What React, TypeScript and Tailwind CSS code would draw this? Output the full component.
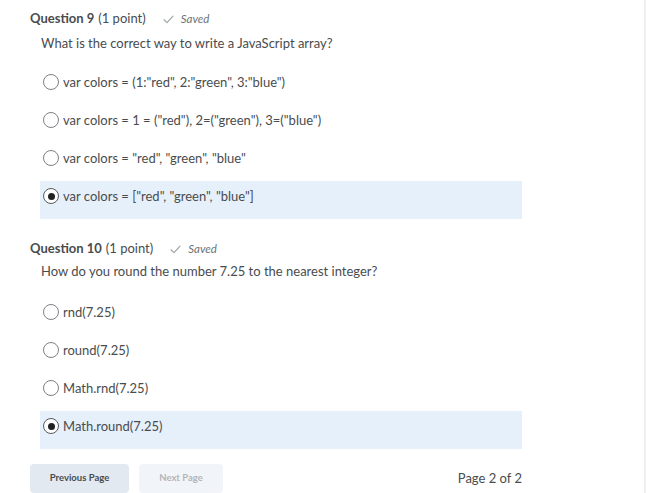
import React from "react";

type Q = {
  num: number;
  text: string;
  options: string[];
  selected: number;
};

const questions: Q[] = [
  {
    num: 9,
    text: "What is the correct way to write a JavaScript array?",
    options: [
      'var colors = (1:"red", 2:"green", 3:"blue")',
      'var colors = 1 = ("red"), 2=("green"), 3=("blue")',
      'var colors = "red", "green", "blue"',
      'var colors = ["red", "green", "blue"]',
    ],
    selected: 3,
  },
  {
    num: 10,
    text: "How do you round the number 7.25 to the nearest integer?",
    options: ["rnd(7.25)", "round(7.25)", "Math.rnd(7.25)", "Math.round(7.25)"],
    selected: 3,
  },
];

function Check() {
  return (
    <svg width="11" height="9" viewBox="0 0 11 9" className="mr-[7px]">
      <path d="M1 4.8 L4 7.6 L10 1.2" fill="none" stroke="#9ea3a6" strokeWidth="1.2" strokeLinecap="round" strokeLinejoin="round" />
    </svg>
  );
}

function Radio({ checked }: { checked: boolean }) {
  return (
    <span
      className={
        checked
          ? "flex h-[16px] w-[16px] shrink-0 items-center justify-center rounded-full border border-[#565a5c] bg-white"
          : "flex h-[16px] w-[16px] shrink-0 items-center justify-center rounded-full border border-[#7c8186] bg-white"
      }
    >
      {checked && <span className="h-[7px] w-[7px] rounded-full bg-[#202122]" />}
    </span>
  );
}

function Question({ q, first }: { q: Q; first: boolean }) {
  return (
    <div className={first ? "flex flex-col" : "mt-[20px] flex flex-col"}>
      <div className="mt-[1px] flex h-[18px] items-center text-[13px] text-[#494c4e]">
        <span className="font-bold">Question {q.num}</span>
        <span className="ml-[4px]">(1 point)</span>
        <span className="ml-[17px] flex items-center text-[11.5px] italic text-[#6e7376]">
          <Check />
          Saved
        </span>
      </div>
      <div className={first ? "mt-[6px] h-[18px] pl-[11px] text-[13px] leading-[18px] text-[#494c4e]" : "mt-[4px] h-[18px] pl-[11px] text-[13px] leading-[18px] text-[#494c4e]"}>
        {q.text}
      </div>
      <div className={first ? "mt-[15px] ml-[10px] flex flex-col" : "mt-[17px] ml-[10px] flex flex-col"}>
        {q.options.map((o, i) => (
          <div
            key={i}
            className={
              i === q.selected
                ? "flex h-[38px] items-start bg-[#e6f0fb] pl-[3px] pt-[7px]"
                : "flex h-[38px] items-start pl-[3px] pt-[7px]"
            }
          >
            <Radio checked={i === q.selected} />
            <span className="ml-[4px] text-[13px] leading-[16px] text-[#494c4e]">{o}</span>
          </div>
        ))}
      </div>
    </div>
  );
}

export default function App() {
  return (
    <div
      className="flex h-[493px] w-[646px] bg-white"
      style={{ fontFamily: "Lato, 'Open Sans', sans-serif" }}
    >
      <div className="flex w-[644px] flex-col pl-[30px] pt-[9px]">
        <div className="w-[492px]">
          {questions.map((q, i) => (
            <Question key={q.num} q={q} first={i === 0} />
          ))}
          <div className="mt-[15px] flex h-[29px] items-center">
            <button className="h-[29px] w-[99px] rounded-[4px] bg-[#e3e9f1] text-[9.5px] font-bold text-[#494c4e]">
              Previous Page
            </button>
            <button className="ml-[10px] h-[29px] w-[84px] rounded-[4px] bg-[#f1f4f8] text-[9.5px] font-bold text-[#b1b6ba]">
              Next Page
            </button>
            <span className="ml-auto text-[13px] text-[#494c4e]">Page 2 of 2</span>
          </div>
        </div>
      </div>
      <div className="h-full w-[2px] bg-[#efefef]" />
    </div>
  );
}
